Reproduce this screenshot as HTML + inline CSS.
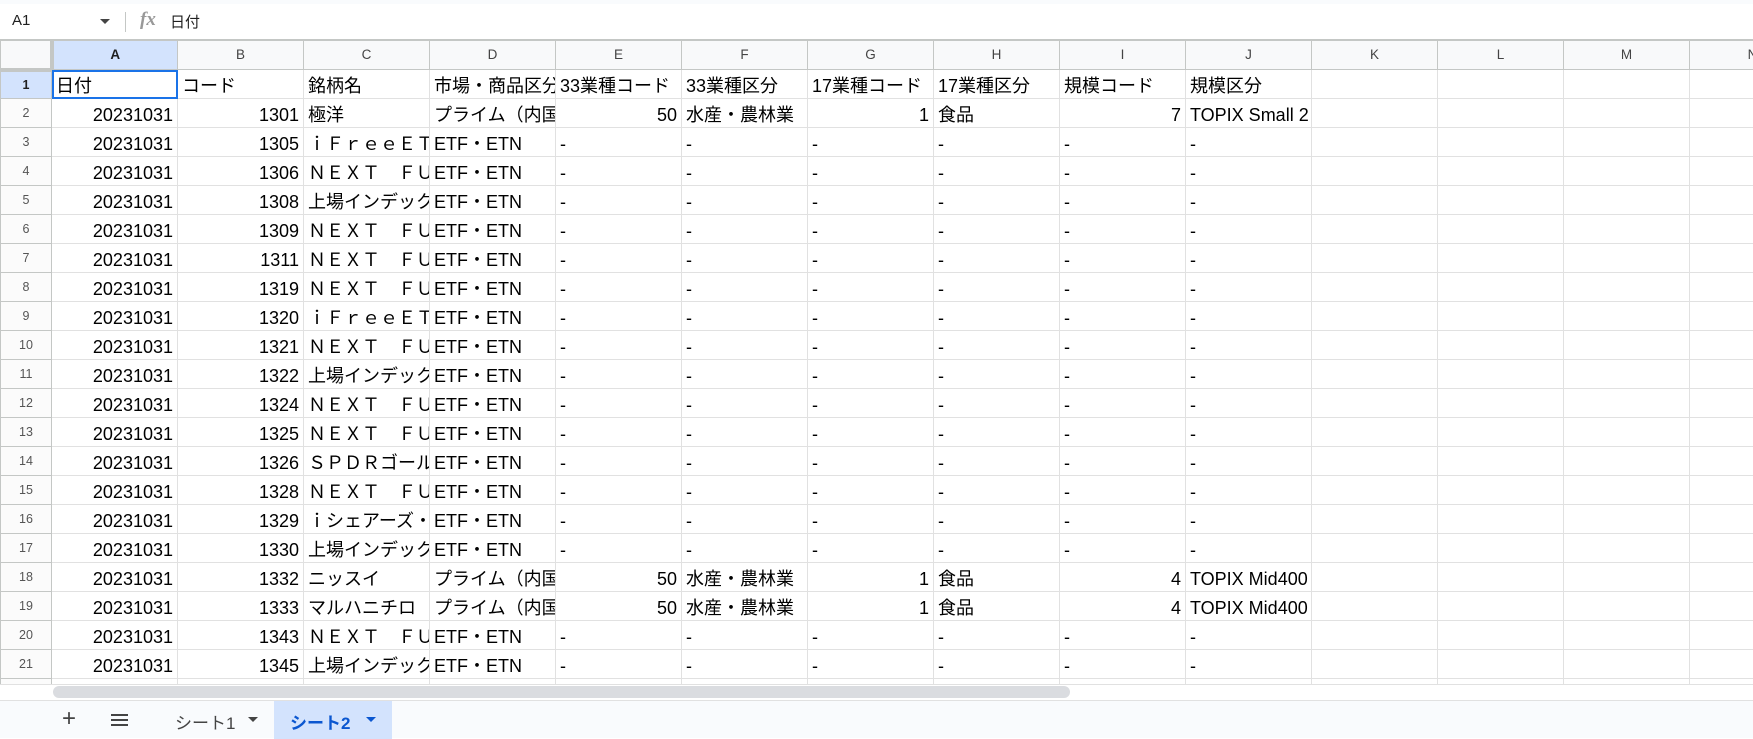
<!DOCTYPE html>
<html><head><meta charset="utf-8">
<style>
*{box-sizing:border-box;margin:0;padding:0}
body{width:1753px;height:738px;overflow:hidden;background:#fff;font-family:"Liberation Sans","Noto Sans CJK JP",sans-serif;position:relative}
#fb{position:absolute;left:0;top:0;width:1753px;height:40px;background:#fff;border-bottom:1px solid #c4c7c5}
#fb .top{position:absolute;left:0;top:0;width:100%;height:4px;background:#f9fbfd}
#fb .nm{position:absolute;left:12px;top:12px;font-size:15px;color:#1f1f1f}
#fb .dd{position:absolute;left:100px;top:19px;width:0;height:0;border-left:5px solid transparent;border-right:5px solid transparent;border-top:5px solid #444}
#fb .sep{position:absolute;left:125px;top:12px;width:1px;height:20px;background:#c4c7c5}
#fb .fx{position:absolute;left:140px;top:9px;font-family:"Liberation Serif",serif;font-style:italic;font-weight:bold;font-size:19px;color:#999}
#fb .v{position:absolute;left:170px;top:11px;font-size:15px;color:#1f1f1f}
table{position:absolute;left:0;top:40px;border-collapse:collapse;table-layout:fixed;width:1815px}
td,th{height:29px;overflow:hidden;white-space:nowrap;border:1px solid #e1e1e1;font-size:18px;color:#000;padding:3px 4px 0 4px;font-weight:normal;vertical-align:middle;line-height:24px}
th{background:#f8f9fa;color:#444;font-size:13.5px;text-align:center;border-color:#c4c7c5;padding:0}
thead th{border-bottom:1px solid #c4c7c5}
th.sel{background:#d3e3fd;font-weight:bold;color:#1f1f1f}
tbody th{font-size:12.5px;color:#555;background:#fbfbfb}
td.r{text-align:right}
#a1{outline:2px solid #1a73e8;outline-offset:-2px}
#sb{position:absolute;left:0;top:684px;width:1753px;height:16px;background:#fff;border-top:1px solid #e1e1e1}
#sbt{position:absolute;left:53px;top:686px;width:1017px;height:12px;background:#dadce0;border-radius:6px}
#tabs{position:absolute;left:0;top:700px;width:1753px;height:38px;background:#f9fbfd;border-top:1px solid #e1e1e1}
#tabs .pl{position:absolute;left:62px;top:4px;font-size:24px;color:#444}
#tabs .mn{position:absolute;left:111px;top:13px;width:17px}
#tabs .mn i{display:block;height:2px;background:#444;margin-bottom:3px}
#tabs .t1{position:absolute;left:175px;top:8px;font-size:17px;color:#444}
#tabs .a1{position:absolute;left:248px;top:16px;border-left:5px solid transparent;border-right:5px solid transparent;border-top:5px solid #444}
#tabs .act{position:absolute;left:274px;top:0;width:118px;height:38px;background:#d3e3fd}
#tabs .t2{position:absolute;left:290px;top:8px;font-size:17px;color:#0b57d0;font-weight:bold}
#tabs .a2{position:absolute;left:366px;top:16px;border-left:5px solid transparent;border-right:5px solid transparent;border-top:5px solid #0b57d0}
</style></head><body>
<div id="fb"><div class="top"></div><div class="nm">A1</div><div class="dd"></div><div class="sep"></div><div class="fx">fx</div><div class="v">日付</div></div>
<table>
<colgroup><col style="width:51px"><col style="width:126px"><col style="width:126px"><col style="width:126px"><col style="width:126px"><col style="width:126px"><col style="width:126px"><col style="width:126px"><col style="width:126px"><col style="width:126px"><col style="width:126px"><col style="width:126px"><col style="width:126px"><col style="width:126px"><col style="width:126px"></colgroup>
<thead><tr><th style="border-right:4px solid #c4c7c5;border-bottom:4px solid #c4c7c5"></th><th class="sel">A</th><th>B</th><th>C</th><th>D</th><th>E</th><th>F</th><th>G</th><th>H</th><th>I</th><th>J</th><th>K</th><th>L</th><th>M</th><th>N</th></tr></thead>
<tbody>
<tr><th class="sel">1</th><td id="a1">日付</td><td>コード</td><td>銘柄名</td><td>市場・商品区分</td><td>33業種コード</td><td>33業種区分</td><td>17業種コード</td><td>17業種区分</td><td>規模コード</td><td>規模区分</td><td></td><td></td><td></td><td></td></tr>
<tr><th>2</th><td class="r">20231031</td><td class="r">1301</td><td>極洋</td><td>プライム（内国株式）</td><td class="r">50</td><td>水産・農林業</td><td class="r">1</td><td>食品</td><td class="r">7</td><td>TOPIX Small 2</td><td></td><td></td><td></td><td></td></tr>
<tr><th>3</th><td class="r">20231031</td><td class="r">1305</td><td>ｉＦｒｅｅＥＴＦ</td><td>ETF・ETN</td><td>-</td><td>-</td><td>-</td><td>-</td><td>-</td><td>-</td><td></td><td></td><td></td><td></td></tr>
<tr><th>4</th><td class="r">20231031</td><td class="r">1306</td><td>ＮＥＸＴ　ＦＵＮＤＳ</td><td>ETF・ETN</td><td>-</td><td>-</td><td>-</td><td>-</td><td>-</td><td>-</td><td></td><td></td><td></td><td></td></tr>
<tr><th>5</th><td class="r">20231031</td><td class="r">1308</td><td>上場インデックス</td><td>ETF・ETN</td><td>-</td><td>-</td><td>-</td><td>-</td><td>-</td><td>-</td><td></td><td></td><td></td><td></td></tr>
<tr><th>6</th><td class="r">20231031</td><td class="r">1309</td><td>ＮＥＸＴ　ＦＵＮＤＳ</td><td>ETF・ETN</td><td>-</td><td>-</td><td>-</td><td>-</td><td>-</td><td>-</td><td></td><td></td><td></td><td></td></tr>
<tr><th>7</th><td class="r">20231031</td><td class="r">1311</td><td>ＮＥＸＴ　ＦＵＮＤＳ</td><td>ETF・ETN</td><td>-</td><td>-</td><td>-</td><td>-</td><td>-</td><td>-</td><td></td><td></td><td></td><td></td></tr>
<tr><th>8</th><td class="r">20231031</td><td class="r">1319</td><td>ＮＥＸＴ　ＦＵＮＤＳ</td><td>ETF・ETN</td><td>-</td><td>-</td><td>-</td><td>-</td><td>-</td><td>-</td><td></td><td></td><td></td><td></td></tr>
<tr><th>9</th><td class="r">20231031</td><td class="r">1320</td><td>ｉＦｒｅｅＥＴＦ</td><td>ETF・ETN</td><td>-</td><td>-</td><td>-</td><td>-</td><td>-</td><td>-</td><td></td><td></td><td></td><td></td></tr>
<tr><th>10</th><td class="r">20231031</td><td class="r">1321</td><td>ＮＥＸＴ　ＦＵＮＤＳ</td><td>ETF・ETN</td><td>-</td><td>-</td><td>-</td><td>-</td><td>-</td><td>-</td><td></td><td></td><td></td><td></td></tr>
<tr><th>11</th><td class="r">20231031</td><td class="r">1322</td><td>上場インデックス</td><td>ETF・ETN</td><td>-</td><td>-</td><td>-</td><td>-</td><td>-</td><td>-</td><td></td><td></td><td></td><td></td></tr>
<tr><th>12</th><td class="r">20231031</td><td class="r">1324</td><td>ＮＥＸＴ　ＦＵＮＤＳ</td><td>ETF・ETN</td><td>-</td><td>-</td><td>-</td><td>-</td><td>-</td><td>-</td><td></td><td></td><td></td><td></td></tr>
<tr><th>13</th><td class="r">20231031</td><td class="r">1325</td><td>ＮＥＸＴ　ＦＵＮＤＳ</td><td>ETF・ETN</td><td>-</td><td>-</td><td>-</td><td>-</td><td>-</td><td>-</td><td></td><td></td><td></td><td></td></tr>
<tr><th>14</th><td class="r">20231031</td><td class="r">1326</td><td>ＳＰＤＲゴールド</td><td>ETF・ETN</td><td>-</td><td>-</td><td>-</td><td>-</td><td>-</td><td>-</td><td></td><td></td><td></td><td></td></tr>
<tr><th>15</th><td class="r">20231031</td><td class="r">1328</td><td>ＮＥＸＴ　ＦＵＮＤＳ</td><td>ETF・ETN</td><td>-</td><td>-</td><td>-</td><td>-</td><td>-</td><td>-</td><td></td><td></td><td></td><td></td></tr>
<tr><th>16</th><td class="r">20231031</td><td class="r">1329</td><td>ｉシェアーズ・コア</td><td>ETF・ETN</td><td>-</td><td>-</td><td>-</td><td>-</td><td>-</td><td>-</td><td></td><td></td><td></td><td></td></tr>
<tr><th>17</th><td class="r">20231031</td><td class="r">1330</td><td>上場インデックス</td><td>ETF・ETN</td><td>-</td><td>-</td><td>-</td><td>-</td><td>-</td><td>-</td><td></td><td></td><td></td><td></td></tr>
<tr><th>18</th><td class="r">20231031</td><td class="r">1332</td><td>ニッスイ</td><td>プライム（内国株式）</td><td class="r">50</td><td>水産・農林業</td><td class="r">1</td><td>食品</td><td class="r">4</td><td>TOPIX Mid400</td><td></td><td></td><td></td><td></td></tr>
<tr><th>19</th><td class="r">20231031</td><td class="r">1333</td><td>マルハニチロ</td><td>プライム（内国株式）</td><td class="r">50</td><td>水産・農林業</td><td class="r">1</td><td>食品</td><td class="r">4</td><td>TOPIX Mid400</td><td></td><td></td><td></td><td></td></tr>
<tr><th>20</th><td class="r">20231031</td><td class="r">1343</td><td>ＮＥＸＴ　ＦＵＮＤＳ</td><td>ETF・ETN</td><td>-</td><td>-</td><td>-</td><td>-</td><td>-</td><td>-</td><td></td><td></td><td></td><td></td></tr>
<tr><th>21</th><td class="r">20231031</td><td class="r">1345</td><td>上場インデックス</td><td>ETF・ETN</td><td>-</td><td>-</td><td>-</td><td>-</td><td>-</td><td>-</td><td></td><td></td><td></td><td></td></tr>
<tr><th></th><td></td><td></td><td></td><td></td><td></td><td></td><td></td><td></td><td></td><td></td><td></td><td></td><td></td><td></td></tr>
</tbody></table>
<div id="sb"></div><div id="sbt"></div>
<div id="tabs">
<div class="pl">+</div>
<div class="mn"><i></i><i></i><i></i></div>
<div class="t1">シート1</div><div class="a1"></div>
<div class="act"></div><div class="t2">シート2</div><div class="a2"></div>
</div>
</body></html>
